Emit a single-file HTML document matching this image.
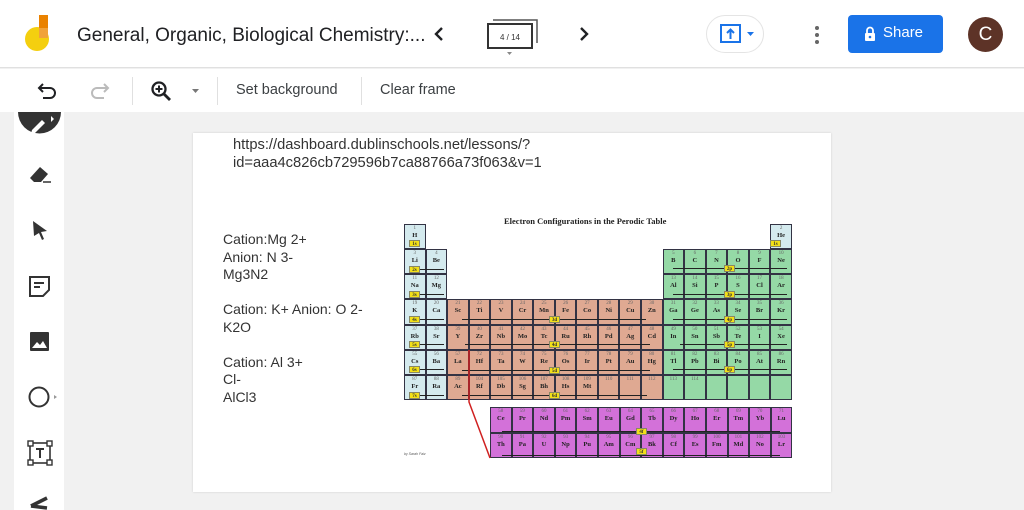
<!DOCTYPE html>
<html><head><meta charset="utf-8">
<style>
*{margin:0;padding:0;box-sizing:border-box}
body{width:1024px;height:510px;overflow:hidden;background:#f1f1f1;font-family:"Liberation Sans",sans-serif;position:relative;color:#202124}
.abs{position:absolute}
#top{left:0;top:0;width:1024px;height:68px;background:#fff;border-bottom:1px solid #e0e0e0}
#tb{left:0;top:69px;width:1024px;height:43px;background:#fff}
.sep{position:absolute;top:77px;width:1px;height:28px;background:#e0e0e0}
#side{left:14px;top:112px;width:50px;height:398px;background:#fff}
#canvas{left:193px;top:133px;width:638px;height:359px;background:#fff;box-shadow:0 0 2px rgba(0,0,0,.15)}
.t{font-size:14px;color:#333;line-height:17.5px}
#pt{left:404px;top:224px;display:grid;grid-template-columns:repeat(18,21.55px);grid-template-rows:repeat(7,25.15px)}
#fb{left:490px;top:407px;display:grid;grid-template-columns:repeat(14,21.6px);grid-template-rows:repeat(2,25.5px)}
.c{border:0.7px solid #334;font-family:"Liberation Serif",serif;font-size:6.5px;font-weight:bold;text-align:center;line-height:8px;padding-top:1px;color:#222;position:relative}
.c i{display:block;font-style:normal;font-weight:normal;font-size:5px;line-height:6px;color:#666}
.s{background:#d4eaee}.d{background:#dfa992}.p{background:#95d9a6}.f{background:#d371d9}
.y{position:absolute;background:#f3e018;border:0.5px solid #886;font-family:"Liberation Serif",serif;font-size:5px;font-weight:bold;width:11px;height:7px;line-height:7px;text-align:center;color:#333}
.ar{position:absolute;height:1px;background:#222}
</style></head><body>
<div id="top" class="abs"></div>
<svg class="abs" style="left:24px;top:14px" width="30" height="40" viewBox="0 0 30 40"><circle cx="13" cy="25" r="12" fill="#f4cf0f"/><rect x="15" y="1" width="9" height="13" fill="#ea8200"/><rect x="15" y="14" width="9" height="10" fill="#f1a23a"/></svg>
<div class="abs" style="left:77px;top:25px;font-size:19px;color:#202124">General, Organic, Biological Chemistry:...</div>
<svg class="abs" style="left:433px;top:26px" width="12" height="16" viewBox="0 0 12 16"><path d="M9 2 L3 8 L9 14" stroke="#202124" stroke-width="2.4" fill="none"/></svg>
<svg class="abs" style="left:485px;top:15px" width="56" height="42" viewBox="0 0 56 42"><path d="M8 5 H52 V28" stroke="#555" stroke-width="1.5" fill="none"/><rect x="3" y="9" width="44" height="24" fill="#fff" stroke="#333" stroke-width="2"/><text x="25" y="25" font-size="8" text-anchor="middle" font-family="Liberation Sans" fill="#333">4 / 14</text><path d="M22 37 h5 l-2.5 3z" fill="#888"/></svg>
<svg class="abs" style="left:578px;top:26px" width="12" height="16" viewBox="0 0 12 16"><path d="M3 2 L9 8 L3 14" stroke="#202124" stroke-width="2.4" fill="none"/></svg>
<div class="abs" style="left:706px;top:15px;width:58px;height:38px;border:1px solid #e4e4e4;border-radius:19px"></div>
<svg class="abs" style="left:720px;top:24px" width="40" height="20" viewBox="0 0 40 20"><rect x="1" y="1" width="19" height="17" fill="none" stroke="#1a73e8" stroke-width="2"/><path d="M10.5 15 V6 M7 9 l3.5-3.5 3.5 3.5" stroke="#1a73e8" stroke-width="2" fill="none"/><path d="M27 8 h7 l-3.5 4z" fill="#1a73e8"/></svg>
<svg class="abs" style="left:813px;top:24px" width="8" height="22"><circle cx="4" cy="4" r="2" fill="#666"/><circle cx="4" cy="11" r="2" fill="#666"/><circle cx="4" cy="18" r="2" fill="#666"/></svg>
<div class="abs" style="left:848px;top:15px;width:95px;height:38px;background:#1a73e8;border-radius:4px;color:#fff;font-size:15px;line-height:36px;padding-left:35px">Share</div>
<svg class="abs" style="left:864px;top:26px" width="12" height="15" viewBox="0 0 12 15"><path d="M3 7 V4.5 a3 3 0 0 1 6 0 V7" stroke="#fff" stroke-width="1.8" fill="none"/><rect x="1" y="7" width="10" height="8" rx="1" fill="#fff"/><circle cx="6" cy="11" r="1.3" fill="#1a73e8"/></svg>
<div class="abs" style="left:968px;top:17px;width:35px;height:35px;border-radius:50%;background:#5d3327;color:#fff;font-size:19px;line-height:35px;text-align:center">C</div>

<div id="tb" class="abs"></div>
<svg class="abs" style="left:37px;top:81px" width="22" height="20" viewBox="0 0 22 20"><path d="M6 3 L2 7 L6 11 M2 7 H13 a5 5 0 0 1 0 10 H6" stroke="#202124" stroke-width="2" fill="none"/></svg>
<svg class="abs" style="left:88px;top:81px" width="22" height="20" viewBox="0 0 22 20"><path d="M16 3 L20 7 L16 11 M20 7 H9 a5 5 0 0 0 0 10 H16" stroke="#bbb" stroke-width="2" fill="none"/></svg>
<div class="sep" style="left:132px"></div>
<svg class="abs" style="left:150px;top:80px" width="24" height="24" viewBox="0 0 24 24"><circle cx="9" cy="9" r="6.5" stroke="#202124" stroke-width="2.3" fill="none"/><path d="M14 14 L20 20" stroke="#202124" stroke-width="2.8"/><path d="M9 5.5 V12.5 M5.5 9 H12.5" stroke="#202124" stroke-width="2"/></svg>
<svg class="abs" style="left:192px;top:89px" width="8" height="5"><path d="M0 0 h7 l-3.5 4z" fill="#777"/></svg>
<div class="sep" style="left:217px"></div>
<div class="abs" style="left:236px;top:82px;font-size:14.5px;color:#3c4043">Set background</div>
<div class="sep" style="left:361px"></div>
<div class="abs" style="left:380px;top:82px;font-size:14.5px;color:#3c4043">Clear frame</div>

<div id="side" class="abs"></div>
<svg class="abs" style="left:18px;top:112px" width="44" height="30" viewBox="0 0 44 30"><path d="M0 0 H43 A21.5 21.5 0 0 1 0 0Z" fill="#333"/><path d="M14 18 L24 8 L27 11 L17 21 L13 22Z" fill="#fff"/><path d="M33 4 l3 3 -3 3z" fill="#fff"/></svg>
<svg class="abs" style="left:28px;top:164px" width="26" height="22" viewBox="0 0 26 22"><path d="M2 14 L12 3 L20 10 L13 18 H6Z" fill="#333"/><path d="M15 18 H23" stroke="#333" stroke-width="1.5"/></svg>
<svg class="abs" style="left:31px;top:219px" width="20" height="22" viewBox="0 0 20 22"><path d="M2 2 L16 12 L10 13 L13 20 L11 21 L8 14 L3 17Z" fill="#333"/></svg>
<svg class="abs" style="left:28px;top:275px" width="24" height="24" viewBox="0 0 24 24"><path d="M2 2 H21 V15 L15 21 H2Z" fill="none" stroke="#333" stroke-width="2"/><path d="M6 8 H16 M6 12 H12" stroke="#333" stroke-width="2"/></svg>
<svg class="abs" style="left:29px;top:331px" width="22" height="22" viewBox="0 0 22 22"><rect x="1" y="1" width="19" height="19" rx="1" fill="#333"/><path d="M3 17 L8 11 L11 14 L14 10 L18 17Z" fill="#fff"/></svg>
<svg class="abs" style="left:28px;top:385px" width="32" height="24" viewBox="0 0 32 24"><circle cx="11" cy="12" r="9.5" fill="none" stroke="#333" stroke-width="2"/><path d="M26 10 l3 2 -3 2z" fill="#999"/></svg>
<svg class="abs" style="left:27px;top:440px" width="26" height="26" viewBox="0 0 26 26"><rect x="3" y="3" width="20" height="20" fill="none" stroke="#333" stroke-width="1.6"/><rect x="1" y="1" width="5" height="5" fill="#fff" stroke="#333" stroke-width="1.4"/><rect x="20" y="1" width="5" height="5" fill="#fff" stroke="#333" stroke-width="1.4"/><rect x="1" y="20" width="5" height="5" fill="#fff" stroke="#333" stroke-width="1.4"/><rect x="20" y="20" width="5" height="5" fill="#fff" stroke="#333" stroke-width="1.4"/><path d="M9 9 H17 M13 9 V18" stroke="#333" stroke-width="2"/></svg>
<svg class="abs" style="left:29px;top:494px" width="22" height="16" viewBox="0 0 22 16"><path d="M2 12 L18 4 M2 12 L18 14" stroke="#333" stroke-width="3.5"/></svg>

<div id="canvas" class="abs"></div>
<div class="abs t" style="left:233px;top:137px;font-size:14.7px">https://dashboard.dublinschools.net/lessons/?<br>id=aaa4c826cb729596b7ca88766a73f063&amp;v=1</div>
<div class="abs t" style="left:223px;top:231px">Cation:Mg 2+<br>Anion: N 3-<br>Mg3N2<br><br>Cation: K+ Anion: O 2-<br>K2O<br><br>Cation: Al 3+<br>Cl-<br>AlCl3</div>

<div class="abs" style="left:504px;top:216px;font-family:'Liberation Serif',serif;font-size:8.5px;font-weight:bold;color:#222">Electron Configurations in the Perodic Table</div>

<div id="pt" class="abs">
<div class="c s"><i>1</i>H</div><div class="c s" style="grid-column:18"><i>2</i>He</div>
<div class="c s"><i>3</i>Li</div><div class="c s"><i>4</i>Be</div><div class="c p" style="grid-column:13"><i>5</i>B</div><div class="c p"><i>6</i>C</div><div class="c p"><i>7</i>N</div><div class="c p"><i>8</i>O</div><div class="c p"><i>9</i>F</div><div class="c p"><i>10</i>Ne</div>
<div class="c s"><i>11</i>Na</div><div class="c s"><i>12</i>Mg</div><div class="c p" style="grid-column:13"><i>13</i>Al</div><div class="c p"><i>14</i>Si</div><div class="c p"><i>15</i>P</div><div class="c p"><i>16</i>S</div><div class="c p"><i>17</i>Cl</div><div class="c p"><i>18</i>Ar</div>
<div class="c s"><i>19</i>K</div><div class="c s"><i>20</i>Ca</div><div class="c d"><i>21</i>Sc</div><div class="c d"><i>22</i>Ti</div><div class="c d"><i>23</i>V</div><div class="c d"><i>24</i>Cr</div><div class="c d"><i>25</i>Mn</div><div class="c d"><i>26</i>Fe</div><div class="c d"><i>27</i>Co</div><div class="c d"><i>28</i>Ni</div><div class="c d"><i>29</i>Cu</div><div class="c d"><i>30</i>Zn</div><div class="c p"><i>31</i>Ga</div><div class="c p"><i>32</i>Ge</div><div class="c p"><i>33</i>As</div><div class="c p"><i>34</i>Se</div><div class="c p"><i>35</i>Br</div><div class="c p"><i>36</i>Kr</div>
<div class="c s"><i>37</i>Rb</div><div class="c s"><i>38</i>Sr</div><div class="c d"><i>39</i>Y</div><div class="c d"><i>40</i>Zr</div><div class="c d"><i>41</i>Nb</div><div class="c d"><i>42</i>Mo</div><div class="c d"><i>43</i>Tc</div><div class="c d"><i>44</i>Ru</div><div class="c d"><i>45</i>Rh</div><div class="c d"><i>46</i>Pd</div><div class="c d"><i>47</i>Ag</div><div class="c d"><i>48</i>Cd</div><div class="c p"><i>49</i>In</div><div class="c p"><i>50</i>Sn</div><div class="c p"><i>51</i>Sb</div><div class="c p"><i>52</i>Te</div><div class="c p"><i>53</i>I</div><div class="c p"><i>54</i>Xe</div>
<div class="c s"><i>55</i>Cs</div><div class="c s"><i>56</i>Ba</div><div class="c d"><i>57</i>La</div><div class="c d"><i>72</i>Hf</div><div class="c d"><i>73</i>Ta</div><div class="c d"><i>74</i>W</div><div class="c d"><i>75</i>Re</div><div class="c d"><i>76</i>Os</div><div class="c d"><i>77</i>Ir</div><div class="c d"><i>78</i>Pt</div><div class="c d"><i>79</i>Au</div><div class="c d"><i>80</i>Hg</div><div class="c p"><i>81</i>Tl</div><div class="c p"><i>82</i>Pb</div><div class="c p"><i>83</i>Bi</div><div class="c p"><i>84</i>Po</div><div class="c p"><i>85</i>At</div><div class="c p"><i>86</i>Rn</div>
<div class="c s"><i>87</i>Fr</div><div class="c s"><i>88</i>Ra</div><div class="c d"><i>89</i>Ac</div><div class="c d"><i>104</i>Rf</div><div class="c d"><i>105</i>Db</div><div class="c d"><i>106</i>Sg</div><div class="c d"><i>107</i>Bh</div><div class="c d"><i>108</i>Hs</div><div class="c d"><i>109</i>Mt</div><div class="c d"><i>110</i></div><div class="c d"><i>111</i></div><div class="c d"><i>112</i></div><div class="c p"><i>113</i></div><div class="c p"><i>114</i></div><div class="c p"></div><div class="c p"></div><div class="c p"></div><div class="c p"></div>
</div>

<div id="fb" class="abs">
<div class="c f"><i>58</i>Ce</div><div class="c f"><i>59</i>Pr</div><div class="c f"><i>60</i>Nd</div><div class="c f"><i>61</i>Pm</div><div class="c f"><i>62</i>Sm</div><div class="c f"><i>63</i>Eu</div><div class="c f"><i>64</i>Gd</div><div class="c f"><i>65</i>Tb</div><div class="c f"><i>66</i>Dy</div><div class="c f"><i>67</i>Ho</div><div class="c f"><i>68</i>Er</div><div class="c f"><i>69</i>Tm</div><div class="c f"><i>70</i>Yb</div><div class="c f"><i>71</i>Lu</div>
<div class="c f"><i>90</i>Th</div><div class="c f"><i>91</i>Pa</div><div class="c f"><i>92</i>U</div><div class="c f"><i>93</i>Np</div><div class="c f"><i>94</i>Pu</div><div class="c f"><i>95</i>Am</div><div class="c f"><i>96</i>Cm</div><div class="c f"><i>97</i>Bk</div><div class="c f"><i>98</i>Cf</div><div class="c f"><i>99</i>Es</div><div class="c f"><i>100</i>Fm</div><div class="c f"><i>101</i>Md</div><div class="c f"><i>102</i>No</div><div class="c f"><i>103</i>Lr</div>
</div>

<div class="y" style="left:409px;top:240px">1s</div><div class="y" style="left:770px;top:240px">1s</div>
<div class="y" style="left:409px;top:266px">2s</div><div class="y" style="left:409px;top:291px">3s</div><div class="y" style="left:409px;top:316px">4s</div><div class="y" style="left:409px;top:341px">5s</div><div class="y" style="left:409px;top:366px">6s</div><div class="y" style="left:409px;top:392px">7s</div>
<div class="ar" style="left:420px;top:269px;width:24px"></div><div class="ar" style="left:420px;top:294px;width:24px"></div><div class="ar" style="left:420px;top:319px;width:24px"></div><div class="ar" style="left:420px;top:344px;width:24px"></div><div class="ar" style="left:420px;top:369px;width:24px"></div><div class="ar" style="left:420px;top:395px;width:24px"></div>
<div class="ar" style="left:673px;top:268px;width:114px"></div><div class="y" style="left:724px;top:265px">2p</div>
<div class="ar" style="left:673px;top:294px;width:114px"></div><div class="y" style="left:724px;top:291px">3p</div>
<div class="ar" style="left:673px;top:319px;width:114px"></div><div class="y" style="left:724px;top:316px">4p</div>
<div class="ar" style="left:680px;top:344px;width:107px"></div><div class="y" style="left:724px;top:341px">5p</div>
<div class="ar" style="left:673px;top:369px;width:114px"></div><div class="y" style="left:724px;top:366px">6p</div>
<div class="ar" style="left:462px;top:319px;width:184px"></div><div class="y" style="left:549px;top:316px">3d</div>
<div class="ar" style="left:465px;top:344px;width:185px"></div><div class="y" style="left:549px;top:341px">4d</div>
<div class="ar" style="left:462px;top:370px;width:188px"></div><div class="y" style="left:549px;top:367px">5d</div>
<div class="ar" style="left:462px;top:395px;width:185px"></div><div class="y" style="left:549px;top:392px">6d</div>
<div class="ar" style="left:502px;top:431px;width:278px"></div><div class="y" style="left:636px;top:428px">4f</div>
<div class="ar" style="left:502px;top:455px;width:278px"></div><div class="y" style="left:636px;top:448px">5f</div>
<svg class="abs" style="left:460px;top:350px" width="40" height="110"><path d="M9 0 V52 L30 108" stroke="#d02020" stroke-width="1.5" fill="none"/></svg>
<div class="abs" style="left:404px;top:452px;font-size:3.5px;color:#555;font-style:italic">by Sarah Faiz</div>
</body></html>
